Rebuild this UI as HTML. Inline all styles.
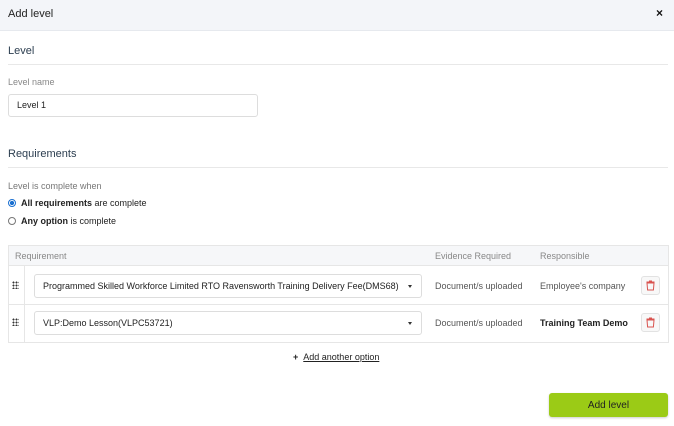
<!DOCTYPE html>
<html><head><style>
*{box-sizing:border-box;margin:0;padding:0}
body{width:674px;height:426px;background:#fff;font-family:"Liberation Sans",sans-serif;color:#333;position:relative;overflow:hidden;font-size:9px}
.a{position:absolute}
.hdr{left:0;top:0;width:674px;height:31px;background:#f3f5f9;border-bottom:1px solid #e6e9ee}
.sel{position:absolute;left:34px;width:388px;height:24px;border:1px solid #ddd;border-radius:3px;padding:0 0 0 8px;line-height:22px;font-size:9px;color:#222}
.sel:after{content:"";position:absolute;right:9px;top:10px;border-left:2.5px solid transparent;border-right:2.5px solid transparent;border-top:3px solid #333}
.del{position:absolute;left:641px;width:19px;height:19px;border:1px solid #e2e2e2;border-radius:3px;background:#f8f8f8}
.grip{position:absolute;left:12px;width:7px;height:8px;background-image:radial-gradient(circle,#333 0.9px,transparent 1.1px);background-size:3px 3px}
</style></head><body>
<div class="a hdr"></div>
<div class="a" style="left:8px;top:8px;font-size:11px;color:#222">Add level</div>
<div class="a" style="left:656px;top:6px;font-size:12px;font-weight:bold;color:#111">×</div>
<div class="a" style="left:8px;top:45px;font-size:11px;color:#2c3e50">Level</div>
<div class="a" style="left:8px;top:64px;width:660px;height:1px;background:#e8e8e8"></div>
<div class="a" style="left:8px;top:77px;color:#888">Level name</div>
<div class="a" style="left:8px;top:94px;width:250px;height:23px;border:1px solid #ddd;border-radius:3px;padding-left:8px;line-height:21px;color:#222">Level 1</div>
<div class="a" style="left:8px;top:148px;font-size:11px;color:#2c3e50">Requirements</div>
<div class="a" style="left:8px;top:167px;width:660px;height:1px;background:#e8e8e8"></div>
<div class="a" style="left:8px;top:181px;color:#777">Level is complete when</div>
<div class="a" style="left:8px;top:199px;width:8px;height:8px;border-radius:50%;border:1px solid #1a6fd0;background:radial-gradient(#1a6fd0 45%,#fff 55%)"></div>
<div class="a" style="left:21px;top:198px;color:#222"><b>All requirements</b> are complete</div>
<div class="a" style="left:8px;top:217px;width:8px;height:8px;border-radius:50%;border:1px solid #777"></div>
<div class="a" style="left:21px;top:216px;color:#222"><b>Any option</b> is complete</div>
<div class="a" style="left:8px;top:245px;width:661px;height:98px;border:1px solid #e6e6e6"></div>
<div class="a" style="left:9px;top:246px;width:659px;height:20px;background:#f6f7f9;border-bottom:1px solid #e6e6e6"></div>
<div class="a" style="left:9px;top:304px;width:659px;height:1px;background:#e6e6e6"></div>
<div class="a" style="left:24px;top:266px;width:1px;height:76px;background:#e6e6e6"></div>
<div class="a" style="left:15px;top:251px;color:#888">Requirement</div>
<div class="a" style="left:435px;top:251px;color:#888">Evidence Required</div>
<div class="a" style="left:540px;top:251px;color:#888">Responsible</div>
<div class="grip" style="top:281px"></div>
<div class="grip" style="top:318px"></div>
<div class="sel" style="top:274px">Programmed Skilled Workforce Limited RTO Ravensworth Training Delivery Fee(DMS68)</div>
<div class="sel" style="top:311px">VLP:Demo Lesson(VLPC53721)</div>
<div class="a" style="left:435px;top:281px;color:#555">Document/s uploaded</div>
<div class="a" style="left:435px;top:318px;color:#555">Document/s uploaded</div>
<div class="a" style="left:540px;top:281px;color:#555">Employee's company</div>
<div class="a" style="left:540px;top:318px;color:#222;font-weight:bold">Training Team Demo</div>
<div class="del" style="top:276px"><svg width="17" height="17" viewBox="0 0 17 17"><path d="M5 6h7l-.6 7h-5.8z M4.5 5h8 M7 4h3" stroke="#d9534f" stroke-width="1" fill="none"/></svg></div>
<div class="del" style="top:313px"><svg width="17" height="17" viewBox="0 0 17 17"><path d="M5 6h7l-.6 7h-5.8z M4.5 5h8 M7 4h3" stroke="#d9534f" stroke-width="1" fill="none"/></svg></div>
<div class="a" style="left:293px;top:352px;color:#222"><b>+</b>&nbsp;&nbsp;<u>Add another option</u></div>
<div class="a" style="left:549px;top:393px;width:119px;height:24px;background:#9bcb16;border-radius:3px;text-align:center;padding-top:7px;font-size:10px;line-height:11px;color:#222;box-shadow:0 1px 2px rgba(0,0,0,.2)">Add level</div>
</body></html>
